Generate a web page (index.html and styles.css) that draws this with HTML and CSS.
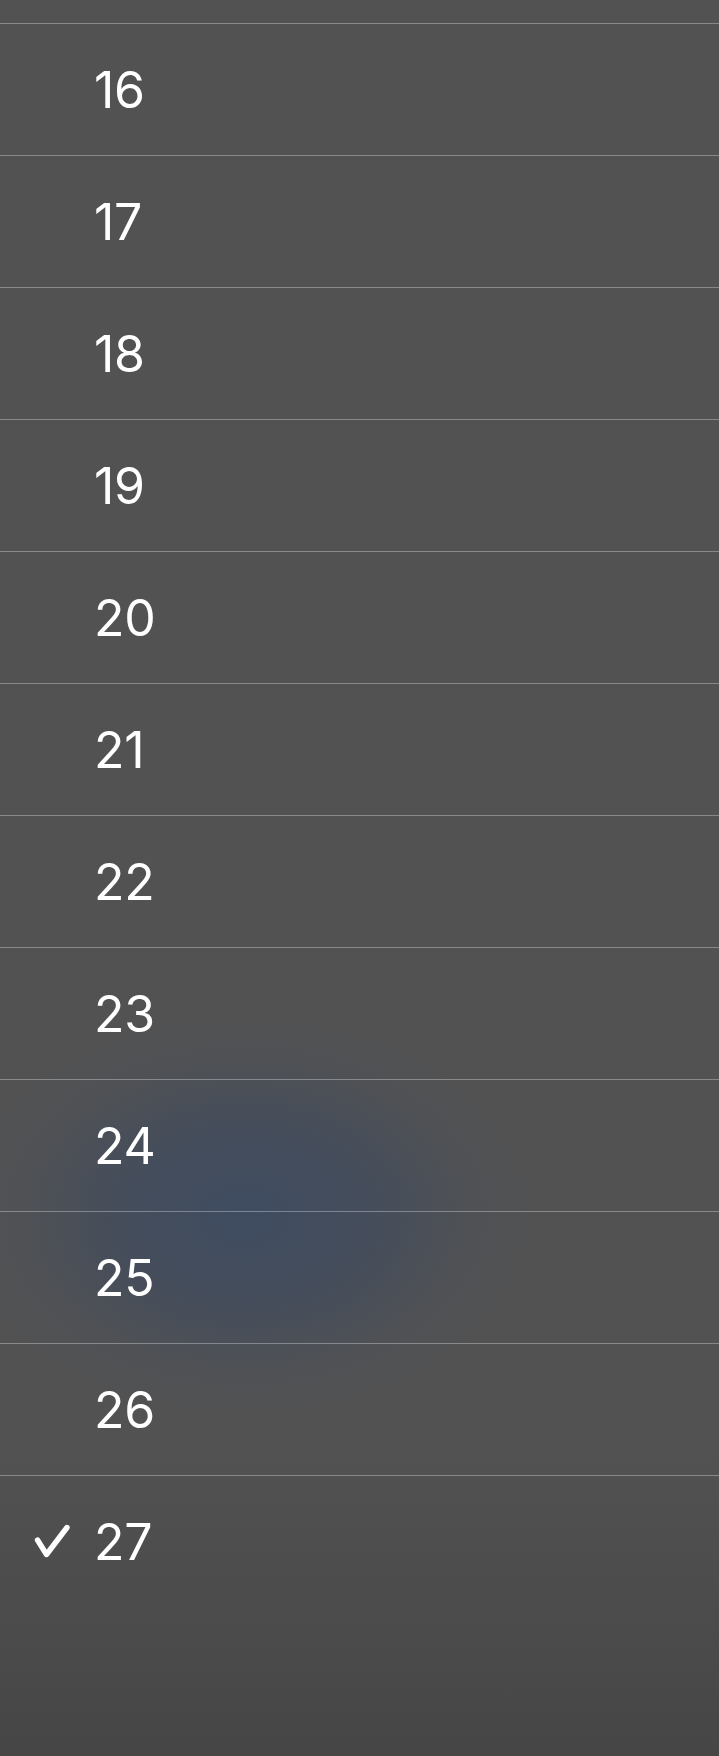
FILE: index.html
```html
<!DOCTYPE html>
<html>
<head>
<meta charset="utf-8">
<link rel="stylesheet" href="styles.css">
</head>
<body>
<div class="menu">
  <ul class="list">
    <li class="row"><span class="check"></span><span class="num">16</span></li>
    <li class="row"><span class="check"></span><span class="num">17</span></li>
    <li class="row"><span class="check"></span><span class="num">18</span></li>
    <li class="row"><span class="check"></span><span class="num">19</span></li>
    <li class="row"><span class="check"></span><span class="num">20</span></li>
    <li class="row"><span class="check"></span><span class="num">21</span></li>
    <li class="row"><span class="check"></span><span class="num">22</span></li>
    <li class="row"><span class="check"></span><span class="num">23</span></li>
    <li class="row"><span class="check"></span><span class="num">24</span></li>
    <li class="row"><span class="check"></span><span class="num">25</span></li>
    <li class="row"><span class="check"></span><span class="num">26</span></li>
    <li class="row"><span class="check"><svg width="38" height="38" viewBox="0 0 38 38"><path d="M4.5 17 L13.5 31.5 L34 4.5" fill="none" stroke="#fff" stroke-width="5.4" stroke-linecap="round" stroke-linejoin="round"/></svg></span><span class="num">27</span></li>
  </ul>
</div>
</body>
</html>
```
FILE: styles.css
```css
html, body {
  margin: 0;
  padding: 0;
}
body {
  width: 719px;
  height: 1756px;
  overflow: hidden;
  background: #525252;
  font-family: Inter, "Noto Sans", "Liberation Sans", sans-serif;
}
.menu {
  height: 1756px;
  box-sizing: border-box;
  padding-top: 23px;
  background:
    radial-gradient(ellipse 300px 210px at 245px 1215px, rgba(58, 74, 100, 0.8) 0%, rgba(60, 74, 98, 0.6) 40%, rgba(70, 78, 92, 0.25) 75%, rgba(82, 82, 82, 0) 100%),
    linear-gradient(to bottom, #525252 0%, #525252 82%, #464646 100%);
}
.list {
  list-style: none;
  margin: 0;
  padding: 0;
}
.row {
  box-sizing: border-box;
  height: 132px;
  border-top: 1px solid rgba(255, 255, 255, 0.32);
  display: flex;
  align-items: center;
}
.check {
  width: 38px;
  height: 38px;
  margin-left: 33px;
  margin-right: 23px;
  display: flex;
  align-items: center;
  justify-content: center;
}
.check svg {
  display: block;
}
.num {
  color: #ffffff;
  font-size: 50px;
  font-weight: 400;
  line-height: 1;
  letter-spacing: -0.3px;
  margin-top: 1px;
}
```
